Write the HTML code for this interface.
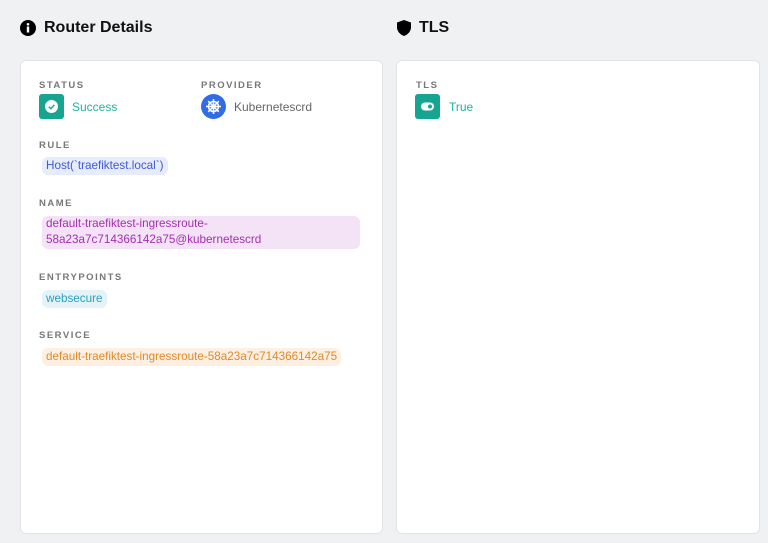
<!DOCTYPE html>
<html><head><meta charset="utf-8"><style>
*{margin:0;padding:0;box-sizing:border-box}
body{width:768px;height:543px;background:#f0f1f3;font-family:"Liberation Sans",sans-serif;position:relative;overflow:hidden}
.t{position:absolute;top:19px;font-size:16px;font-weight:bold;color:#111;display:flex;align-items:center;gap:8px}
.card{position:absolute;top:60px;height:474px;background:#fff;border:1px solid #e2e3e6;border-radius:6px}
.lb{position:absolute;font-size:9.5px;font-weight:bold;letter-spacing:1.5px;color:#777}
.v{position:absolute;font-size:12px}
.ic{position:absolute;width:25px;height:25px;border-radius:3px;background:#17a592}
.chip{position:absolute;font-size:11.7px;border-radius:6px;padding:1px 4px;line-height:16px}
</style></head><body>
<div class="t" style="left:20px"><svg width="16" height="16" viewBox="0 0 16 16"><circle cx="8" cy="8" r="8" fill="#000"/><rect x="6.8" y="6.5" width="2.4" height="6" fill="#fff"/><circle cx="8" cy="4.3" r="1.3" fill="#fff"/></svg>Router Details</div>
<div class="t" style="left:397px"><svg width="14" height="16" viewBox="0 0 14 16"><path d="M7 0L14 2.5V7c0 4.5-3 7.5-7 9C3 14.5 0 11.5 0 7V2.5z" fill="#000"/></svg>TLS</div>
<div class="card" style="left:20px;width:363px"></div>
<div class="card" style="left:396px;width:364px"></div>
<div class="lb" style="left:39px;top:80px">STATUS</div>
<div class="ic" style="left:39px;top:94px"><svg width="25" height="25" viewBox="0 0 25 25"><circle cx="12.5" cy="12.5" r="6.5" fill="#fff"/><path d="M9.8 12.7l2 2 3.6-3.8" stroke="#17a592" stroke-width="1.4" fill="none"/></svg></div>
<div class="v" style="left:72px;top:100px;color:#1cb3a0">Success</div>
<div class="lb" style="left:201px;top:80px">PROVIDER</div>
<svg style="position:absolute;left:201px;top:94px" width="25" height="25" viewBox="0 0 25 25"><circle cx="12.5" cy="12.5" r="12.5" fill="#326ce5"/><g stroke="#fff" stroke-width="1.5" fill="none"><circle cx="12.5" cy="12.5" r="5"/><path d="M12.5 5v15M5 12.5h15M7.2 7.2l10.6 10.6M17.8 7.2L7.2 17.8"/></g></svg>
<div class="v" style="left:234px;top:100px;color:#666">Kubernetescrd</div>
<div class="lb" style="left:39px;top:140px">RULE</div>
<div class="chip" style="left:42px;top:157px;background:#e6ebfd;color:#3d5ad6">Host(`traefiktest.local`)</div>
<div class="lb" style="left:39px;top:198px">NAME</div>
<div class="chip" style="left:42px;top:216px;width:318px;height:33px;background:#f4e3f6;color:#a42eb3;line-height:16px;padding:0 4px">default-traefiktest-ingressroute-<br>58a23a7c714366142a75@kubernetescrd</div>
<div class="lb" style="left:39px;top:272px">ENTRYPOINTS</div>
<div class="chip" style="left:42px;top:290px;background:#e3f3f8;color:#2aa0c0">websecure</div>
<div class="lb" style="left:39px;top:330px">SERVICE</div>
<div class="chip" style="left:42px;top:348px;background:#fdefe2;color:#e08a2a">default-traefiktest-ingressroute-58a23a7c714366142a75</div>
<div class="lb" style="left:416px;top:80px">TLS</div>
<div class="ic" style="left:415px;top:94px"><svg width="25" height="25" viewBox="0 0 25 25"><rect x="6" y="8.5" width="13" height="8" rx="4" fill="#fff"/><circle cx="15" cy="12.5" r="2" fill="#17a592"/></svg></div>
<div class="v" style="left:449px;top:100px;color:#1cb3a0">True</div>
</body></html>
